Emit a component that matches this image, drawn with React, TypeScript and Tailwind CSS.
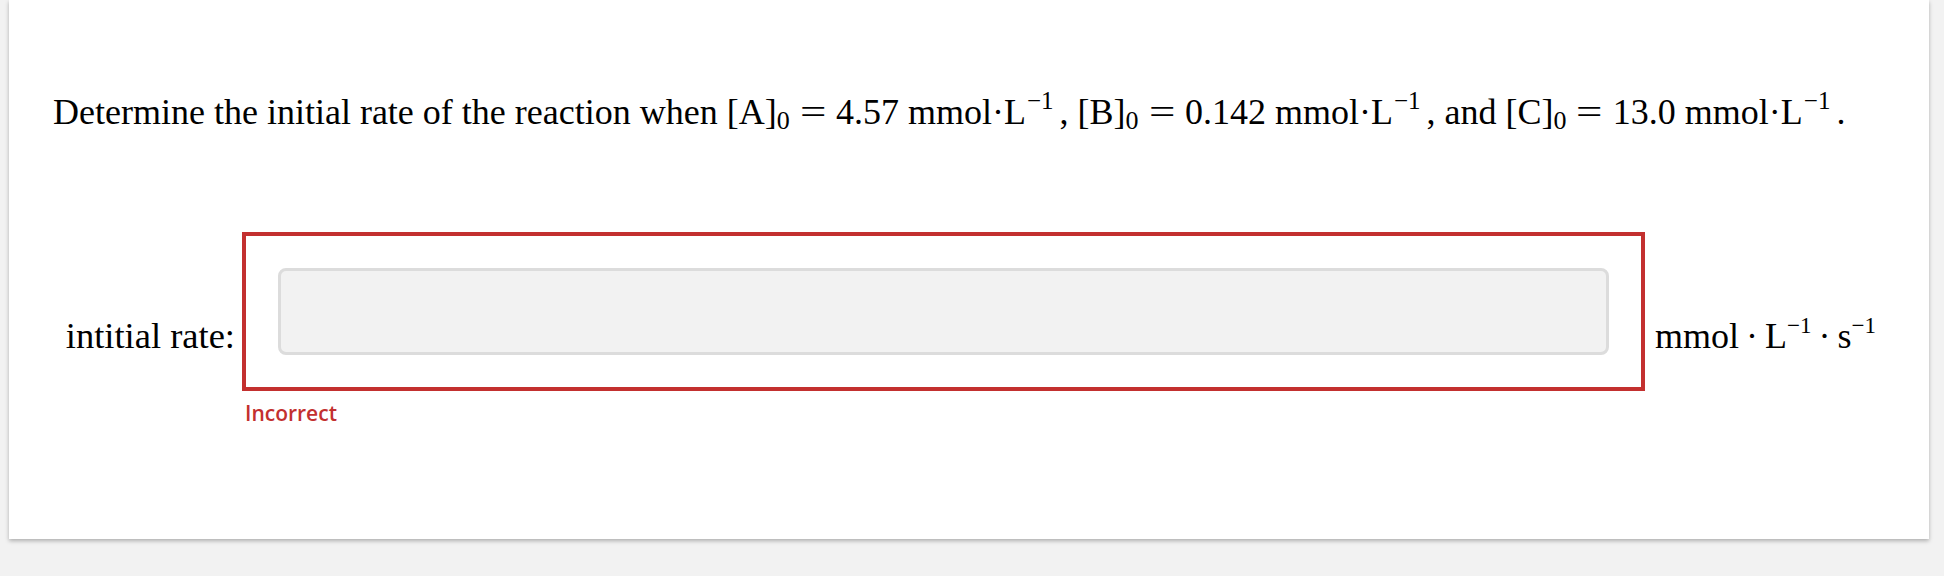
const Sub = ({ children }: { children: React.ReactNode }) => (
  <sub className="bottom-[-0.18em] text-[26px]">{children}</sub>
);

const Sup = ({ children }: { children: React.ReactNode }) => (
  <sup className="top-[-0.62em] ml-[1px] text-[25px]">{children}</sup>
);

const UnitSup = ({ children }: { children: React.ReactNode }) => (
  <sup className="top-[-0.66em] text-[23px]">{children}</sup>
);

// wider "=" like the MathJax one
const Eq = () => (
  <span className="mx-[13px] inline-block scale-x-[1.3]">=</span>
);

const App = () => {
  return (
    <div className="min-h-screen bg-[#f2f2f2] pl-[9px] pr-[15px] font-['Liberation_Serif','Times_New_Roman',serif] text-black">
      <div className="bg-white pb-[115px] shadow-[0_2px_4px_rgba(0,0,0,0.28)]">
        <p className="pl-[44px] pt-[94px] text-[36px] leading-none whitespace-nowrap">
          Determine the initial rate of the reaction when [A]<Sub>0</Sub>
          <Eq />
          4.57 mmol·L<Sup>−1</Sup>
          <span className="ml-[6px]">, </span>[B]<Sub>0</Sub>
          <Eq />
          0.142 mmol·L<Sup>−1</Sup>
          <span className="ml-[6px]">, </span>and [C]<Sub>0</Sub>
          <Eq />
          13.0 mmol·L<Sup>−1</Sup>
          <span className="ml-[6px]">.</span>
        </p>

        <div className="mt-[102px] flex items-end">
          <span className="w-[233px] shrink-0 pb-[37px] pr-[7px] text-right text-[36.5px] leading-none whitespace-nowrap">
            intitial rate:
          </span>
          <div className="w-[1403px] shrink-0 border-4 border-[#c3302f] p-[32px]">
            <input
              type="text"
              aria-label="initial rate"
              className="block h-[87px] w-full rounded-[8px] border-[3px] border-[#dcdcdc] bg-[#f2f2f2] outline-none"
            />
          </div>
          <span className="pb-[37px] pl-[10px] text-[36px] leading-none whitespace-nowrap">
            mmol<span className="mx-[7px]">·</span>L<UnitSup>−1</UnitSup>
            <span className="mx-[7px]">·</span>s<UnitSup>−1</UnitSup>
          </span>
        </div>

        <p className="ml-[236px] mt-[12px] font-['Open_Sans',sans-serif] text-[21px] font-semibold leading-none text-[#c3302f]">
          Incorrect
        </p>
      </div>
    </div>
  );
};

export default App;
